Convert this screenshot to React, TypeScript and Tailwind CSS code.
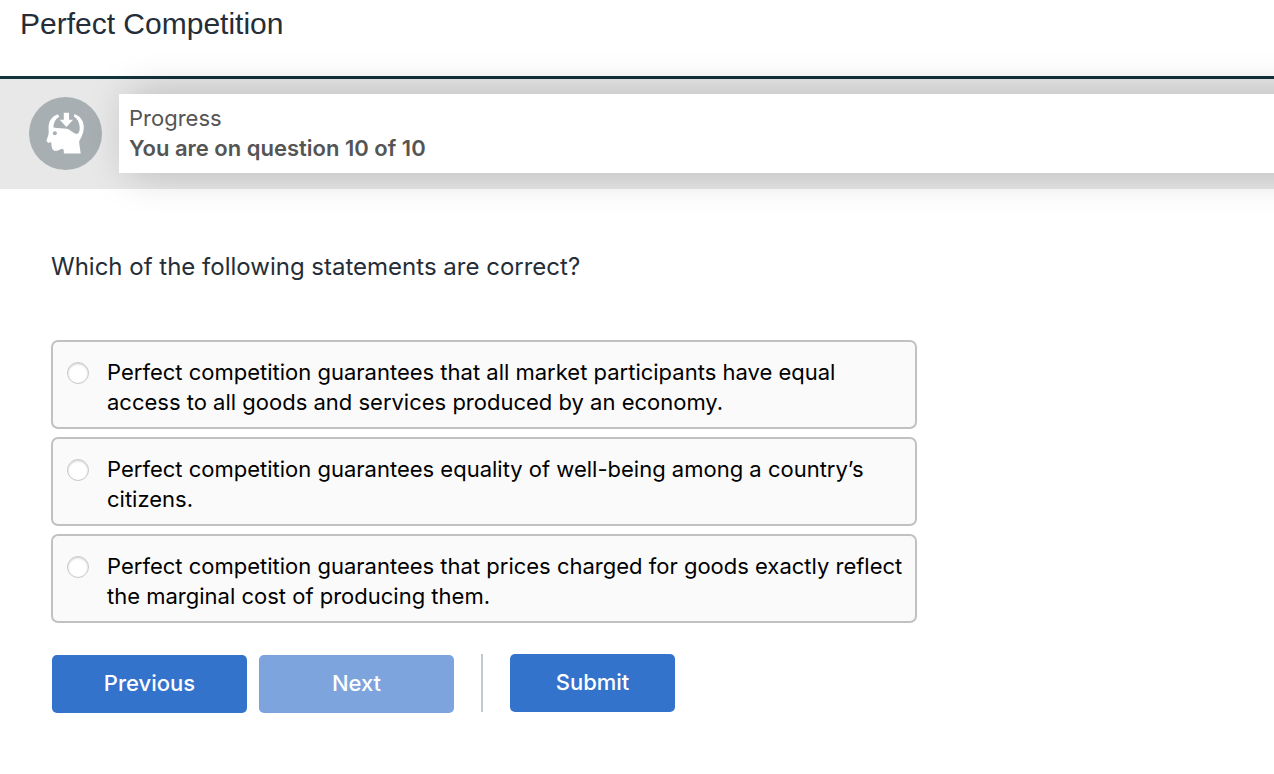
import { useState } from "react";

const answers = [
  "Perfect competition guarantees that all market participants have equal access to all goods and services produced by an economy.",
  "Perfect competition guarantees equality of well-being among a country’s citizens.",
  "Perfect competition guarantees that prices charged for goods exactly reflect the marginal cost of producing them.",
];

function QuizIcon() {
  return (
    <svg viewBox="0 0 72 72" className="mt-[3px] size-[73px] shrink-0" aria-hidden="true">
      <circle cx="36" cy="36" r="36" fill="#a7afb2" />
      <path
        fill="#fff"
        d="M28.500 17C22.500 19 19.300 24 19.300 30c0 2.500.3 4.500 0 6.500-.5 2.500-1.900 5-2 7.200 0 .9 1.200 1.100 4.600 1.100.3 2.400.2 5.400 1.600 7 1.500 1.600 3.700 1.300 5.700.6 1.800-.6 3.600-1.400 4.600-.9.6.4.500 2.300.6 4.200h16.600c-.4-3.900-1.500-8-1.500-12 1.500-3.500 4.500-7 4.500-14.200 0-6-3.500-10.700-9.200-12.700l-.6 2.500c3.300 2.200 5.300 5.500 5.700 9.300.4 4-.3 7.800-3 7.800-2.600-.2-5.600-3.600-9.600-5-3.800-1.100-8.600-.2-13.200-1.400.2-4.400 1.600-8.300 5.800-10.500z"
      />
      <path fill="#fff" d="M34.300 15.500h5.200v7h4l-6.600 7.200-6.600-7.200h4z" />
      <circle cx="25.500" cy="35.700" r="2" fill="#a7afb2" />
    </svg>
  );
}

const buttonClass =
  "h-[58px] rounded-[5px] pb-[2px] text-[22px] leading-[30px] font-medium text-white";

export default function App() {
  const [selected, setSelected] = useState<number | null>(null);

  return (
    <div className="min-h-screen overflow-x-clip bg-white font-[Inter,Arial,sans-serif]">
      <header className="border-b-3 border-[#12343b] px-5 pt-1 pb-8">
        <h1 className="font-['Liberation_Sans',Arial,sans-serif] text-[30px] leading-10 text-[#252d38]">
          Perfect Competition
        </h1>
      </header>

      <section className="flex items-start gap-[17px] bg-[#e8e8e8] pt-[15px] pb-4 pl-[29px]">
        <QuizIcon />
        <div className="-mr-16 flex-1 bg-white px-[10px] pt-[9px] pb-[10px] text-[22px] leading-[30px] text-[#555] shadow-[10px_0_40px_rgba(0,0,0,0.22)]">
          <p>Progress</p>
          <p className="font-semibold">You are on question 10 of 10</p>
        </div>
      </section>

      <main className="max-w-[917px] pt-[62px] pl-[51px]">
        <form onSubmit={(event) => event.preventDefault()}>
          <fieldset>
            <legend className="mb-[57px] text-2xl leading-8 text-[#252d38]">
              Which of the following statements are correct?
            </legend>
            <div className="flex flex-col gap-2">
              {answers.map((answer, index) => (
                <label
                  key={answer}
                  className="flex items-start gap-[18px] rounded-[7px] border-2 border-[#c1c1c1] bg-[#fafafa] pt-[15px] pr-2 pb-[10px] pl-[14px] text-[22px] leading-[30px] text-black"
                >
                  <input
                    type="radio"
                    name="answer"
                    checked={selected === index}
                    onChange={() => setSelected(index)}
                    className="mt-[5px] size-[22px] shrink-0 appearance-none rounded-full border border-[#c8c8c8] bg-white shadow-[inset_0_1px_2px_rgba(0,0,0,0.2)] checked:border-[6px] checked:border-[#3373cc]"
                  />
                  <span>{answer}</span>
                </label>
              ))}
            </div>
          </fieldset>

          <div className="flex items-start pt-[31px] pb-14 pl-px">
            <div className="mt-px flex gap-3">
              <button type="button" className={`${buttonClass} w-[195px] bg-[#3373cc]`}>
                Previous
              </button>
              <button type="button" disabled className={`${buttonClass} w-[195px] bg-[#7da4dd]`}>
                Next
              </button>
            </div>
            <div className="ml-[27px] h-[58px] w-[2px] bg-[#bccad3]" />
            <button type="submit" className={`${buttonClass} ml-[27px] w-[165px] bg-[#3373cc]`}>
              Submit
            </button>
          </div>
        </form>
      </main>
    </div>
  );
}
